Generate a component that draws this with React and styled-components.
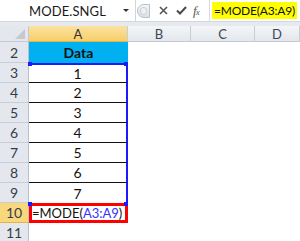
import styled, { createGlobalStyle } from 'styled-components';

const GlobalStyle = createGlobalStyle`
  html, body {
    margin: 0;
    background: #ffffff;
    font-family: Lato, "Liberation Sans", sans-serif;
    overflow: hidden;
  }
`;

const Page = styled.div`
  width: 300px;
  height: 241px;
  overflow: hidden;
  background: #ffffff;
`;

const FormulaBar = styled.div`
  display: flex;
  align-items: center;
  height: 21px;
  background: #ffffff;
`;

const NameBox = styled.div`
  flex: 0 0 136px;
  display: flex;
  align-items: center;
  height: 21px;
  box-sizing: border-box;
  padding-left: 29px;
  border-right: 1px solid #d0d5dc;
  font-size: 13px;
  letter-spacing: 0.1px;
  color: #1a1a1a;
`;

const DropArrow = styled.span`
  width: 0;
  height: 0;
  margin-left: auto;
  margin-right: 6px;
  border-left: 3px solid transparent;
  border-right: 3px solid transparent;
  border-top: 3px solid #333333;
`;

const Grip = styled.div`
  flex: 0 0 13px;
  height: 14px;
  margin-left: 1px;
  box-sizing: border-box;
  border: 1px solid #b9c0c9;
  border-radius: 7px 0 0 7px;
  background: linear-gradient(#f4f6f8, #dde1e6);
  display: flex;
  align-items: center;
  justify-content: center;
`;

const GripDot = styled.span`
  width: 5px;
  height: 6px;
  border-radius: 3px;
  background: #eef0f3;
  border: 1px solid #c9ced5;
`;

const Tools = styled.div`
  flex: 0 0 60px;
  display: flex;
  align-items: center;
  padding-left: 9px;
  gap: 8px;
  height: 21px;
  box-sizing: border-box;
  border-right: 1px solid #d7dbe0;
`;

const Fx = styled.span`
  margin-left: -2px;
  font-family: "Liberation Serif", serif;
  font-style: italic;
  font-size: 13px;
  color: #555;
  letter-spacing: -1px;

  small {
    font-size: 9px;
  }
`;

const FormulaCell = styled.div`
  flex: 1;
  display: flex;
  align-items: center;
  padding-left: 2px;
`;

const Highlight = styled.span`
  background: #ffff00;
  height: 17px;
  display: flex;
  align-items: center;
  padding: 0 2px;
  font-size: 12px;
  letter-spacing: -0.2px;
  color: #111;
  white-space: nowrap;
`;

const Strip = styled.div`
  height: 5px;
  background: #e6e9ed;
  border-top: 1px solid #d3d8de;
  box-sizing: border-box;
`;

const Sheet = styled.div`
  display: grid;
  grid-template-columns: 29px 99px 63px 64px 45px;
  grid-template-rows: 16px 21px repeat(9, 20px);
`;

const Corner = styled.div`
  position: relative;
  background: #e4e8ee;
  border-right: 1px solid #c4cad3;
  border-bottom: 1px solid #c4cad3;
  box-sizing: border-box;

  &::after {
    content: '';
    position: absolute;
    right: 3px;
    bottom: 2px;
    border-left: 10px solid transparent;
    border-bottom: 10px solid #c5cad1;
  }
`;

const ColHead = styled.div`
  display: flex;
  align-items: center;
  justify-content: center;
  box-sizing: border-box;
  font-size: 13px;
  color: ${(p) => (p.$active ? '#333' : '#3c4654')};
  background: ${(p) =>
    p.$active
      ? 'linear-gradient(#fbe2a0, #f6cf6b)'
      : 'linear-gradient(#f3f5f8, #e3e7ec)'};
  border-right: 1px solid #c8ced6;
  border-bottom: 1px solid ${(p) => (p.$active ? '#e7b546' : '#c4cad3')};
`;

const RowHead = styled.div`
  display: flex;
  align-items: center;
  justify-content: center;
  box-sizing: border-box;
  font-size: 14px;
  color: #333d4a;
  background: ${(p) => (p.$active ? '#f9d77c' : '#e4e8ee')};
  border-right: 1px solid #b8c0ca;
  border-bottom: 1px solid ${(p) => (p.$active ? '#e5b34a' : '#c7cdd5')};
`;

const Cell = styled.div`
  position: relative;
  display: flex;
  align-items: center;
  justify-content: center;
  box-sizing: border-box;
  font-size: 14px;
  color: #111;
  background: ${(p) => p.$fill || '#ffffff'};
  font-weight: ${(p) => (p.$bold ? 700 : 400)};
  border-bottom: ${(p) => p.$bottom || 'none'};
  border-right: ${(p) => p.$right || 'none'};
  border-top: ${(p) => p.$top || 'none'};
`;

const Handle = styled.span`
  position: absolute;
  width: 4px;
  height: 4px;
  background: #1a1aff;
  ${(p) => (p.$left ? 'left: -1px;' : 'right: -2px;')}
  ${(p) => (p.$up ? 'top: -3px;' : 'bottom: -3px;')}
`;

const FormulaInCell = styled.div`
  display: flex;
  align-items: center;
  box-sizing: border-box;
  border: 3px solid #ff0000;
  font-size: 13px;
  color: #111;
  white-space: nowrap;
`;

const Ref = styled.span`
  color: #3333ff;
`;

const Blank = styled.div`
  background: #ffffff;
`;

const CrossIcon = () => (
  <svg width="9" height="9" viewBox="0 0 9 9">
    <path d="M1 1 L8 8 M8 1 L1 8" stroke="#555" strokeWidth="1.6" fill="none" />
  </svg>
);

const CheckIcon = () => (
  <svg width="11" height="9" viewBox="0 0 11 9">
    <path d="M1 4.5 L4 7.5 L10 1" stroke="#4a4a4a" strokeWidth="2" fill="none" />
  </svg>
);

const values = [1, 2, 3, 4, 5, 6, 7];
const BLUE = '2px solid #1a1aff';
const LINE = '1px solid #111';

export default function App() {
  return (
    <Page>
      <GlobalStyle />
      <FormulaBar>
        <NameBox>
          MODE.SNGL
          <DropArrow />
        </NameBox>
        <Grip>
          <GripDot />
        </Grip>
        <Tools>
          <CrossIcon />
          <CheckIcon />
          <Fx>
            f<small>x</small>
          </Fx>
        </Tools>
        <FormulaCell>
          <Highlight>=MODE(A3:A9)</Highlight>
        </FormulaCell>
      </FormulaBar>
      <Strip />
      <Sheet>
        <Corner />
        <ColHead $active>A</ColHead>
        <ColHead>B</ColHead>
        <ColHead>C</ColHead>
        <ColHead>D</ColHead>

        <RowHead>2</RowHead>
        <Cell $fill="#00b0f0" $bold>
          Data
        </Cell>
        <Blank />
        <Blank />
        <Blank />

        {values.map((v, i) => (
          <Row key={v} n={i + 3} v={v} first={i === 0} last={i === values.length - 1} />
        ))}

        <RowHead $active>10</RowHead>
        <FormulaInCell>
          =MODE(<Ref>A3:A9</Ref>)
        </FormulaInCell>
        <Blank />
        <Blank />
        <Blank />

        <RowHead>11</RowHead>
        <Blank />
        <Blank />
        <Blank />
        <Blank />
      </Sheet>
    </Page>
  );
}

function Row({ n, v, first, last }) {
  return (
    <>
      <RowHead>{n}</RowHead>
      <Cell $top={first ? BLUE : 'none'} $right={BLUE} $bottom={last ? 'none' : LINE}>
        {v}
        {first && <Handle $left $up />}
        {first && <Handle $up />}
        {last && <Handle $left />}
        {last && <Handle />}
      </Cell>
      <Blank />
      <Blank />
      <Blank />
    </>
  );
}
